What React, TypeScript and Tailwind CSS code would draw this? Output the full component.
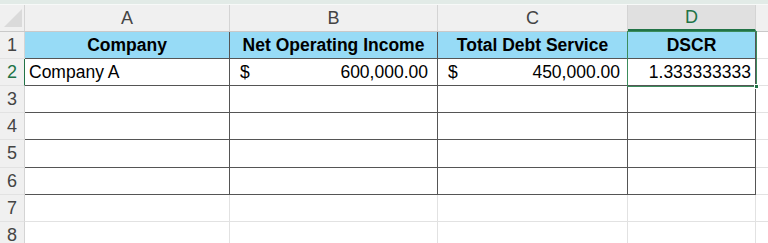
import React from "react";

const COLS = ["A", "B", "C", "D"];

type Row = {
  n: number;
  cells: React.ReactNode[];
  header?: boolean;
  table: boolean;
  tall?: boolean;
};

const rows: Row[] = [
  { n: 1, header: true, table: true, cells: ["Company", "Net Operating Income", "Total Debt Service", "DSCR"] },
  { n: 2, table: true, cells: ["Company A", "600,000.00", "450,000.00", "1.333333333"] },
  { n: 3, table: true, cells: [] },
  { n: 4, table: true, cells: [] },
  { n: 5, table: true, cells: [], tall: true },
  { n: 6, table: true, cells: [] },
  { n: 7, table: false, cells: [] },
  { n: 8, table: false, cells: [] },
];

const widths = ["w-[205px]", "w-[208px]", "w-[190px]", "w-[128px]"];

const Money = ({ value, pr }: { value: string; pr: string }) => (
  <div className={`flex w-full items-center justify-between pl-[10px] ${pr}`}>
    <span>$</span>
    <span>{value}</span>
  </div>
);

const App = () => {
  return (
    <div className="relative h-[243px] w-[768px] overflow-hidden bg-white font-['Liberation_Sans',Arial,sans-serif] text-[17.5px] text-black">
      {/* ribbon edge */}
      <div className="h-[5px] border-b border-[#f7f9f8] bg-[#e2ebe7]" />

      {/* column letters */}
      <div className="flex h-[27px] border-b border-[#c9c9c9] bg-[#f0f0f0] text-[18px] text-[#444]">
        <div className="relative w-[25px] shrink-0 border-r border-[#d4d4d4]">
          <svg className="absolute left-[3px] top-[3px]" width="20" height="20" viewBox="0 0 20 20">
            <polygon points="1,19 19,19 19,1" fill="#dadada" />
          </svg>
        </div>
        {COLS.map((c, i) => (
          <div
            key={c}
            className={`${widths[i]} flex shrink-0 items-center justify-center border-r border-[#d4d4d4] ${
              c === "D" ? "border-b-2 border-b-[#217346] bg-[#e0e0e0] text-[#217346]" : ""
            }`}
          >
            {c}
          </div>
        ))}
        <div className="flex-1" />
      </div>

      {/* grid rows */}
      {rows.map((r) => (
        <div key={r.n} className={`flex ${r.tall ? "h-[28px]" : "h-[27px]"}`}>
          <div
            className={`flex w-[25px] shrink-0 items-center justify-center border-b border-r bg-[#f0f0f0] text-[18px] ${
              r.n === 2
                ? "border-b-[#e2e2e2] border-r-[#217346] text-[#217346]"
                : "border-b-[#e2e2e2] border-r-[#d4d4d4] text-[#444]"
            }`}
          >
            {r.n}
          </div>
          {COLS.map((c, i) => {
            const border = r.table ? "border-[#555]" : "border-[#e2e2e2]";
            const bg = r.header ? "bg-[#97dbf6] font-bold justify-center" : "bg-white";
            let content: React.ReactNode = r.cells[i] ?? null;
            let align = "";
            if (!r.header && r.n === 2) {
              if (i === 0) align = "pl-[4px]";
              if (i === 1) content = <Money value={r.cells[1] as string} pr="pr-[9px]" />;
              if (i === 2) content = <Money value={r.cells[2] as string} pr="pr-[7px]" />;
              if (i === 3) align = "justify-end pr-[4px]";
            }
            return (
              <div
                key={c}
                className={`${widths[i]} flex shrink-0 items-center overflow-hidden whitespace-nowrap border-b border-r ${border} ${bg} ${align}`}
              >
                {content}
              </div>
            );
          })}
          <div className="flex-1 border-b border-[#e2e2e2]" />
        </div>
      ))}

      {/* selection around D1:D2 */}
      <div className="absolute left-[627px] top-[31px] h-[56px] w-[130px] border border-[#3c8c5c]" />
      <div className="absolute left-[754px] top-[84px] h-[5px] w-[5px] border border-white bg-[#217346]" />
    </div>
  );
};

export default App;
